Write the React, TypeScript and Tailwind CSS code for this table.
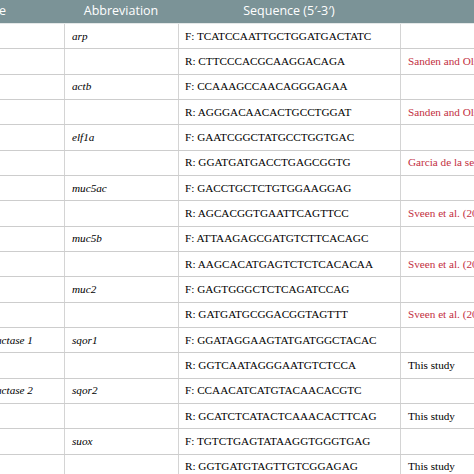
import React from "react";

type Row = {
  gene?: string;
  abbr?: string;
  seq: string;
  ref?: string;
  refRed?: boolean;
};

const rows: Row[] = [
  { gene: "Ribosomal protein", abbr: "arp", seq: "F: TCATCCAATTGCTGGATGACTATC" },
  { seq: "R: CTTCCCACGCAAGGACAGA", ref: "Sanden and Olsen (2009)", refRed: true },
  { gene: "Beta actin", abbr: "actb", seq: "F: CCAAAGCCAACAGGGAGAA" },
  { seq: "R: AGGGACAACACTGCCTGGAT", ref: "Sanden and Olsen (2009)", refRed: true },
  { gene: "Elongation factor 1α", abbr: "elf1a", seq: "F: GAATCGGCTATGCCTGGTGAC" },
  { seq: "R: GGATGATGACCTGAGCGGTG", ref: "Garcia de la serrana (2014)", refRed: true },
  { gene: "Mucin 5ac", abbr: "muc5ac", seq: "F: GACCTGCTCTGTGGAAGGAG" },
  { seq: "R: AGCACGGTGAATTCAGTTCC", ref: "Sveen et al. (2017)", refRed: true },
  { gene: "Mucin 5b", abbr: "muc5b", seq: "F: ATTAAGAGCGATGTCTTCACAGC" },
  { seq: "R: AAGCACATGAGTCTCTCACACAA", ref: "Sveen et al. (2017)", refRed: true },
  { gene: "Mucin 2", abbr: "muc2", seq: "F: GAGTGGGCTCTCAGATCCAG" },
  { seq: "R: GATGATGCGGACGGTAGTTT", ref: "Sveen et al. (2017)", refRed: true },
  { gene: "Sulfide:quinone oxidoreductase 1", abbr: "sqor1", seq: "F: GGATAGGAAGTATGATGGCTACAC" },
  { seq: "R: GGTCAATAGGGAATGTCTCCA", ref: "This study" },
  { gene: "Sulfide:quinone oxidoreductase 2", abbr: "sqor2", seq: "F: CCAACATCATGTACAACACGTC" },
  { seq: "R: GCATCTCATACTCAAACACTTCAG", ref: "This study" },
  { gene: "Sulfite oxidase", abbr: "suox", seq: "F: TGTCTGAGTATAAGGTGGGTGAG" },
  { seq: "R: GGTGATGTAGTTGTCGGAGAG", ref: "This study" },
];

const grid = "grid grid-cols-[188px_114px_222px_240px]";

export default function App() {
  return (
    <div className="w-[474px] h-[474px] overflow-hidden bg-white">
      <div className="ml-[-124px] w-[764px]">
        <div
          className={`${grid} h-[24px] bg-[#7b9397] text-white text-[12.5px] items-center border-b border-[#e4e8e8]`}
          style={{ fontFamily: '"Open Sans", sans-serif' }}
        >
          <div className="text-right pr-[58px]">Gene</div>
          <div className="text-center">Abbreviation</div>
          <div className="text-center">Sequence (5′-3′)</div>
          <div className="text-center">Reference</div>
        </div>
        {rows.map((r, i) => (
          <div
            key={i}
            className={`${grid} h-[25.33px] border-b border-[#cdcdcd] text-[11.2px] text-black`}
            style={{ fontFamily: '"Liberation Serif", "Times New Roman", serif' }}
          >
            <div className="flex items-center pl-[7px] italic whitespace-nowrap">{r.gene}</div>
            <div className="flex items-center pl-[7px] italic border-l border-[#d4d4d4]">{r.abbr}</div>
            <div className="flex items-center pl-[6px] whitespace-nowrap border-l border-[#d4d4d4]">
              {r.seq}
            </div>
            <div
              className={`flex items-center pl-[7px] whitespace-nowrap border-l border-[#d4d4d4] ${
                r.refRed ? "text-[#c3303f]" : "text-black"
              }`}
            >
              {r.ref}
            </div>
          </div>
        ))}
      </div>
    </div>
  );
}
